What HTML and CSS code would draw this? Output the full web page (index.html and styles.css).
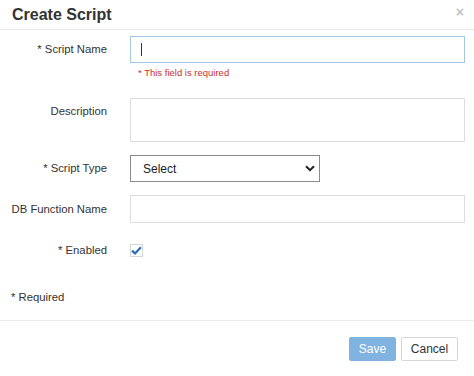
FILE: index.html
```html
<!DOCTYPE html>
<html>
<head>
    <title>Create Script</title>
    <link rel="stylesheet" href="styles.css">
</head>
<body>
    <div class="modal">
        <div class="modal-header">
            <h1>Create Script</h1>
            <span class="close">&times;</span>
        </div>
        <form class="modal-body">
            <div class="form-row">
                <label for="script_name">* Script Name</label>
                <div class="control">
                    <div class="input-wrap">
                        <input type="text" id="script_name" class="text-input focused">
                        <span class="caret"></span>
                    </div>
                    <div class="field-error">* This field is required</div>
                </div>
            </div>
            <div class="form-row row-desc">
                <label for="description">Description</label>
                <div class="control">
                    <textarea id="description" class="text-area"></textarea>
                </div>
            </div>
            <div class="form-row row-type">
                <label for="script_type">* Script Type</label>
                <div class="control">
                    <div class="select-wrap">
                        <select id="script_type" class="select">
                            <option>Select</option>
                        </select>
                        <svg class="chevron" width="10" height="7" viewBox="0 0 10 7">
                            <path d="M1 1.2 L5 5.2 L9 1.2" fill="none" stroke="#222" stroke-width="2"/>
                        </svg>
                    </div>
                </div>
            </div>
            <div class="form-row row-db">
                <label for="db_function">DB Function Name</label>
                <div class="control">
                    <input type="text" id="db_function" class="text-input tall">
                </div>
            </div>
            <div class="form-row row-enabled">
                <label>* Enabled</label>
                <div class="control">
                    <span class="checkbox">
                        <svg width="11" height="9" viewBox="0 0 11 9">
                            <path d="M1 4.6 L4 7.4 L10 1.2" fill="none" stroke="#2d6db5" stroke-width="2.2"/>
                        </svg>
                    </span>
                </div>
            </div>
            <div class="required-note">* Required</div>
        </form>
        <div class="modal-footer">
            <button type="button" class="btn btn-primary">Save</button>
            <button type="button" class="btn btn-default">Cancel</button>
        </div>
    </div>
</body>
</html>
```

FILE: styles.css
```css
body {
    margin: 0;
    font-family: 'Liberation Sans', Arial, sans-serif;
    font-size: 11.3px;
    color: #333;
    background-color: #fff;
}

.modal {
    width: 474px;
    height: 376px;
    background-color: #fff;
}

.modal-header {
    height: 30px;
    box-sizing: border-box;
    border-bottom: 1px solid #ebebeb;
    display: flex;
    justify-content: space-between;
    padding: 4px 10px 0 12px;
}

.modal-header h1 {
    margin: 0;
    font-size: 16px;
    line-height: 22px;
    font-weight: bold;
    color: #333;
}

.close {
    color: #c4c4c4;
    font-size: 14px;
    font-weight: bold;
    line-height: 14px;
    margin-top: 1px;
}

.modal-body {
    padding: 6px 9px 0 0;
    height: 291px;
    box-sizing: border-box;
    border-bottom: 1px solid #ebebeb;
    margin: 0;
}

.form-row {
    display: flex;
    align-items: flex-start;
    gap: 23px;
}

.form-row label {
    width: 107px;
    text-align: right;
    line-height: 27px;
    flex-shrink: 0;
}

.row-db label {
    line-height: 28px;
}

.control {
    flex: 1;
}

.input-wrap,
.select-wrap {
    position: relative;
}

.text-input,
.text-area {
    display: block;
    width: 100%;
    box-sizing: border-box;
    height: 27px;
    border: 1px solid #dcdcdc;
    border-radius: 0;
    padding: 4px 8px;
    font-family: inherit;
    font-size: 12px;
    outline: none;
    margin: 0;
}

.text-input.focused {
    border-color: #a5c7e6;
}

.text-input.tall {
    height: 28px;
}

.caret {
    position: absolute;
    left: 11px;
    top: 7px;
    width: 1px;
    height: 13px;
    background-color: #333;
}

.field-error {
    color: #c9302c;
    font-size: 9.5px;
    line-height: 12px;
    margin-top: 4px;
    padding-left: 8px;
}

.text-area {
    height: 44px;
    resize: none;
}

.row-desc {
    margin-top: 19px;
}

.row-type {
    margin-top: 13px;
}

.select-wrap {
    width: 190px;
}

.select {
    display: block;
    width: 190px;
    height: 27px;
    box-sizing: border-box;
    appearance: none;
    -webkit-appearance: none;
    background-color: #fff;
    border: 1px solid #8a8a8a;
    border-radius: 0;
    padding: 0 12px;
    font-family: inherit;
    font-size: 12px;
    color: #222;
    margin: 0;
}

.chevron {
    position: absolute;
    right: 5px;
    top: 10px;
}

.row-db {
    margin-top: 13px;
}

.row-enabled {
    margin-top: 14px;
}

.checkbox {
    display: flex;
    align-items: center;
    justify-content: center;
    width: 13px;
    height: 13px;
    box-sizing: border-box;
    border: 1px solid #d5d5d5;
    margin-top: 7px;
}

.required-note {
    margin-top: 26px;
    padding-left: 11px;
    line-height: 14px;
}

.modal-footer {
    display: flex;
    justify-content: flex-end;
    gap: 5px;
    padding: 16px 16px 0 0;
}

.btn {
    height: 24px;
    box-sizing: border-box;
    font-family: inherit;
    font-size: 12px;
    border-radius: 2px;
    padding: 0;
    cursor: pointer;
}

.btn-primary {
    width: 47px;
    background-color: #80b3e0;
    border: 1px solid #80b3e0;
    color: #fff;
}

.btn-default {
    width: 57px;
    background-color: #fff;
    border: 1px solid #d6d6d6;
    color: #333;
}
```
